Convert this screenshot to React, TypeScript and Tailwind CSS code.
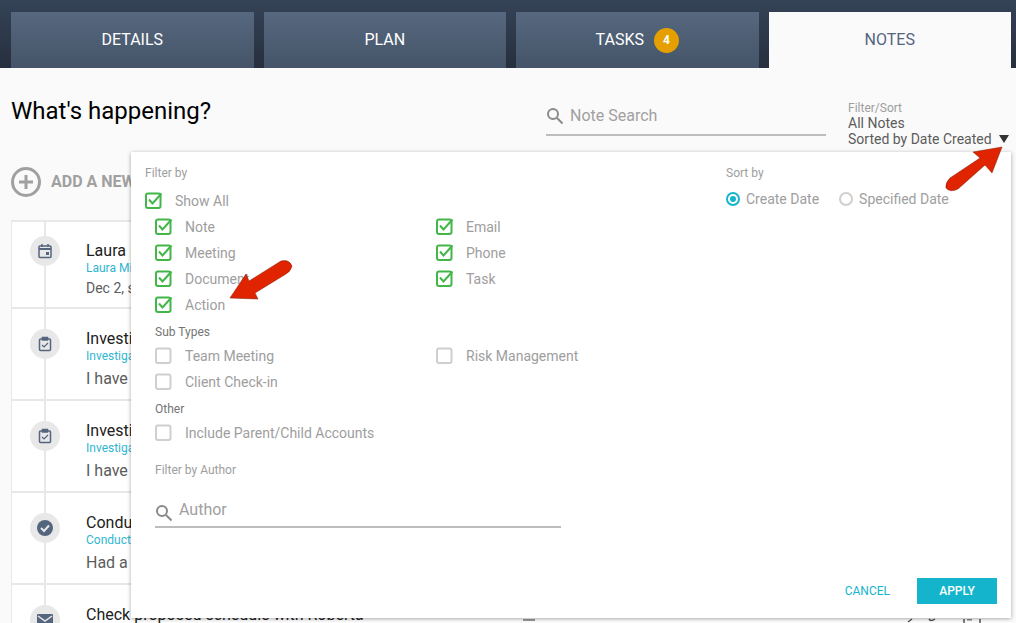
import React from "react";

const Box = ({ on }: { on?: boolean }) =>
  on ? (
    <svg width="20" height="18" viewBox="0 0 20 18" className="shrink-0" fill="none">
      <rect x="1" y="1.5" width="14.5" height="14.5" rx="2" stroke="#43b649" strokeWidth="2" />
      <path d="M4 7.5 L7.5 11.5 L16.5 1.5" stroke="#43b649" strokeWidth="2" />
    </svg>
  ) : (
    <svg width="20" height="18" viewBox="0 0 20 18" className="shrink-0" fill="none">
      <rect x="1" y="1.5" width="14.5" height="14.5" rx="2" stroke="#cfcfcf" strokeWidth="2" />
    </svg>
  );

const Check = ({ label, on }: { label: string; on?: boolean }) => (
  <div className="flex items-center h-[26px] gap-[10px] text-[14px] text-[#9e9e9e]">
    <Box on={on} />
    <span>{label}</span>
  </div>
);

const Tab = ({ children, active }: { children: React.ReactNode; active?: boolean }) => (
  <div
    className={`flex-1 h-[56px] flex items-center justify-center gap-[10px] text-[16px] ${
      active ? "bg-[#fafafa] text-[#54657e]" : "bg-gradient-to-b from-[#56687f] to-[#455468] text-white"
    }`}
  >
    {children}
  </div>
);

const Search = ({ className = "" }: { className?: string }) => (
  <svg width="18" height="18" viewBox="0 0 18 18" fill="none" stroke="#8a8a8a" strokeWidth="2" className={`shrink-0 ${className}`}>
    <circle cx="7" cy="7" r="5" />
    <path d="M11 11 L16.5 16.5" />
  </svg>
);

const Row = ({
  icon,
  title,
  sub,
  body,
  h,
  iconTop,
  bodySize,
}: {
  icon: React.ReactNode;
  title: string;
  sub: string;
  body: string;
  h: string;
  iconTop: string;
  bodySize: string;
}) => (
  <div className={`relative flex border-b-2 border-[#e8e8e8] pl-[18px] ${h}`}>
    <div className="absolute left-[32px] top-0 bottom-0 w-[2px] bg-[#e8e8e8]" />
    <div className={`relative z-10 w-[30px] h-[30px] rounded-full bg-[#e8e8e8] flex items-center justify-center shrink-0 ${iconTop}`}>
      {icon}
    </div>
    <div className="ml-[26px] min-w-0">
      <div className="text-[16px] leading-[19px] text-[#212121] whitespace-nowrap">{title}</div>
      <div className="text-[12px] leading-[16px] text-[#2fb6d0] whitespace-nowrap">{sub}</div>
      <div className={`leading-[24px] text-[#5c5c5c] whitespace-nowrap ${bodySize}`}>{body}</div>
    </div>
  </div>
);

const Clip = () => (
  <svg width="16" height="16" viewBox="0 0 16 16" fill="none" stroke="#54657e" strokeWidth="1.5">
    <rect x="2.5" y="3" width="11" height="11.5" rx="1" />
    <rect x="5.5" y="1.5" width="5" height="2.5" fill="#54657e" />
    <path d="M5 9 L7 11 L11 7" strokeWidth="1.2" />
  </svg>
);

export default function App() {
  return (
    <div className="relative w-[1016px] h-[623px] overflow-hidden bg-[#fafafa] font-['Roboto',sans-serif]">
      <div className="h-[68px] bg-gradient-to-b from-[#354357] to-[#262f3d] pt-[12px] pl-[11px] pr-[5px] flex gap-[10px]">
        <Tab>DETAILS</Tab>
        <Tab>PLAN</Tab>
        <Tab>
          TASKS
          <span className="w-[25px] h-[25px] rounded-full bg-[#e5a000] text-white text-[12px] font-bold flex items-center justify-center">4</span>
        </Tab>
        <Tab active>NOTES</Tab>
      </div>

      <div className="flex pl-[11px] pt-[28px] h-[85px]">
        <div className="text-[24px] leading-[30px] text-black w-[535px]">What's happening?</div>
        <div className="w-[280px] h-[38px] mt-[2px] border-b-2 border-[#bdbdbd] flex items-center gap-[6px] text-[16px] text-[#a0a0a0]">
          <Search />
          <span>Note Search</span>
        </div>
        <div className="ml-[22px] mt-[5px] w-[161px]">
          <div className="text-[12px] leading-[14px] text-[#9e9e9e]">Filter/Sort</div>
          <div className="text-[14px] leading-[16px] text-[#5c5c5c]">All Notes</div>
          <div className="flex items-center justify-between text-[14px] leading-[16px] text-[#5c5c5c]">
            <span>Sorted by Date Created</span>
            <svg width="10" height="8" viewBox="0 0 10 8"><path d="M0 0H10L5 8Z" fill="#333" /></svg>
          </div>
        </div>
      </div>

      <div className="flex items-center gap-[10px] pl-[11px] h-[58px]">
        <svg width="30" height="30" viewBox="0 0 30 30" fill="none" stroke="#a0a0a0">
          <circle cx="15" cy="15" r="13.5" strokeWidth="3" />
          <path d="M15 8V22M8 15H22" strokeWidth="3" />
        </svg>
        <span className="text-[16px] font-bold text-[#a0a0a0] whitespace-nowrap">ADD A NEW NOTE</span>
      </div>

      <div className="mt-[9px] ml-[11px] mr-[5px] bg-white border-t-2 border-l border-[#e8e8e8]">
        <Row
          h="h-[87px] pt-[19px]"
          iconTop="-mt-[5px]"
          bodySize="text-[14px]"
          title="Laura Miller"
          sub="Laura Miller"
          body="Dec 2, scheduled"
          icon={
            <svg width="16" height="16" viewBox="0 0 16 16" fill="none" stroke="#54657e" strokeWidth="1.5">
              <rect x="2" y="3" width="12" height="11.5" rx="1" />
              <path d="M2 6H14" strokeWidth="2" />
              <path d="M5 1V4M11 1V4" />
              <rect x="9" y="9" width="3" height="3" fill="#54657e" stroke="none" />
            </svg>
          }
        />
        <Row h="h-[92px] pt-[20px]" iconTop="" bodySize="text-[16px] mt-[3px]" title="Investigate" sub="Investigate" body="I have" icon={<Clip />} />
        <Row h="h-[92px] pt-[20px]" iconTop="" bodySize="text-[16px] mt-[3px]" title="Investigate" sub="Investigate" body="I have" icon={<Clip />} />
        <Row
          h="h-[92px] pt-[20px]"
          iconTop=""
          bodySize="text-[16px] mt-[3px]"
          title="Conduct"
          sub="Conduct"
          body="Had a"
          icon={
            <svg width="20" height="20" viewBox="0 0 20 20">
              <circle cx="10" cy="10" r="8" fill="#54657e" />
              <path d="M6 10 L9 13 L14 7.5" stroke="#e8e8e8" strokeWidth="2" fill="none" />
            </svg>
          }
        />
        <Row
          h="h-[60px] pt-[20px]"
          iconTop=""
          bodySize="text-[14px]"
          title="Check proposed schedule with Roberta"
          sub=""
          body=""
          icon={
            <svg width="16" height="14" viewBox="0 0 16 14">
              <rect y="1" width="16" height="12" rx="1" fill="#54657e" />
              <path d="M1 3 L8 8 L15 3" stroke="#e8e8e8" strokeWidth="1.5" fill="none" />
            </svg>
          }
        />
      </div>

      <svg className="absolute z-10 left-[520px] top-[616px]" width="470" height="7" viewBox="0 0 470 7" fill="none">
        <rect x="3" y="3" width="12" height="2" fill="#9a9a9a" />
        <path d="M388 6 L392 3" stroke="#555" strokeWidth="1.5" />
        <path d="M409 3 Q411 6 415 3" stroke="#555" strokeWidth="1.5" />
        <path d="M444 3V7M460 3V7" stroke="#555" strokeWidth="1.5" />
        <rect x="447" y="3" width="5" height="1.5" fill="#888" />
      </svg>

      <div className="absolute left-[131px] top-[152px] w-[880px] h-[466px] bg-white shadow-[0_1px_4px_rgba(0,0,0,0.35)] z-20 pl-[14px] pt-[14px]">
        <div className="flex">
          <div className="w-[581px]">
            <div className="text-[12px] leading-[14px] text-[#9e9e9e]">Filter by</div>
            <div className="mt-[8px]"><Check label="Show All" on /></div>
            <div className="pl-[10px]">
              <div className="grid grid-cols-[281px_1fr]">
                <Check label="Note" on />
                <Check label="Email" on />
                <Check label="Meeting" on />
                <Check label="Phone" on />
                <Check label="Document" on />
                <Check label="Task" on />
                <Check label="Action" on />
              </div>
              <div className="text-[12px] leading-[14px] text-[#757575] mt-[7px] mb-[4px]">Sub Types</div>
              <div className="grid grid-cols-[281px_1fr]">
                <Check label="Team Meeting" />
                <Check label="Risk Management" />
                <Check label="Client Check-in" />
              </div>
              <div className="text-[12px] leading-[14px] text-[#757575] mt-[7px] mb-[4px]">Other</div>
              <Check label="Include Parent/Child Accounts" />
              <div className="text-[12px] leading-[14px] text-[#9e9e9e] mt-[17px]">Filter by Author</div>
              <div className="w-[406px] h-[37px] mt-[14px] border-b-2 border-[#bdbdbd] flex items-center gap-[6px] text-[16px] text-[#a0a0a0]">
                <Search className="mt-[9px]" />
                <span className="mt-[2px]">Author</span>
              </div>
            </div>
          </div>
          <div>
            <div className="text-[12px] leading-[14px] text-[#9e9e9e]">Sort by</div>
            <div className="flex items-center mt-[6px] h-[26px] text-[14px] text-[#9e9e9e]">
              <span className="w-[14px] h-[14px] rounded-full border-2 border-[#14b5cc] flex items-center justify-center mr-[6px]">
                <span className="w-[6px] h-[6px] rounded-full bg-[#14b5cc]" />
              </span>
              <span>Create Date</span>
              <span className="w-[14px] h-[14px] rounded-full border-2 border-[#cfcfcf] ml-[20px] mr-[6px]" />
              <span>Specified Date</span>
            </div>
          </div>
        </div>
        <div className="absolute right-[14px] bottom-[14px] flex items-center gap-[27px] text-[12px]">
          <span className="text-[#14b5cc]">CANCEL</span>
          <span className="w-[80px] h-[26px] bg-[#14b5cc] text-white font-medium flex items-center justify-center">APPLY</span>
        </div>
      </div>

      <svg className="absolute z-30 left-[225px] top-[255px]" width="70" height="50" viewBox="0 0 70 50">
        <path d="M5 43 L21 19 L24 26 L56 6 Q64 4 67 11 Q66 16 61 19 L30 38 L33 44 Z" fill="#e12400" stroke="#7a1a08" strokeWidth="0.5" />
      </svg>
      <svg className="absolute z-30 left-[942px] top-[144px]" width="70" height="52" viewBox="0 0 70 52">
        <path d="M60 3 L50 29 L43 21 L16 45 Q8 49 4 44 Q3 39 8 34 L38 14 L31 8 Z" fill="#e12400" stroke="#7a1a08" strokeWidth="0.5" />
      </svg>
    </div>
  );
}
